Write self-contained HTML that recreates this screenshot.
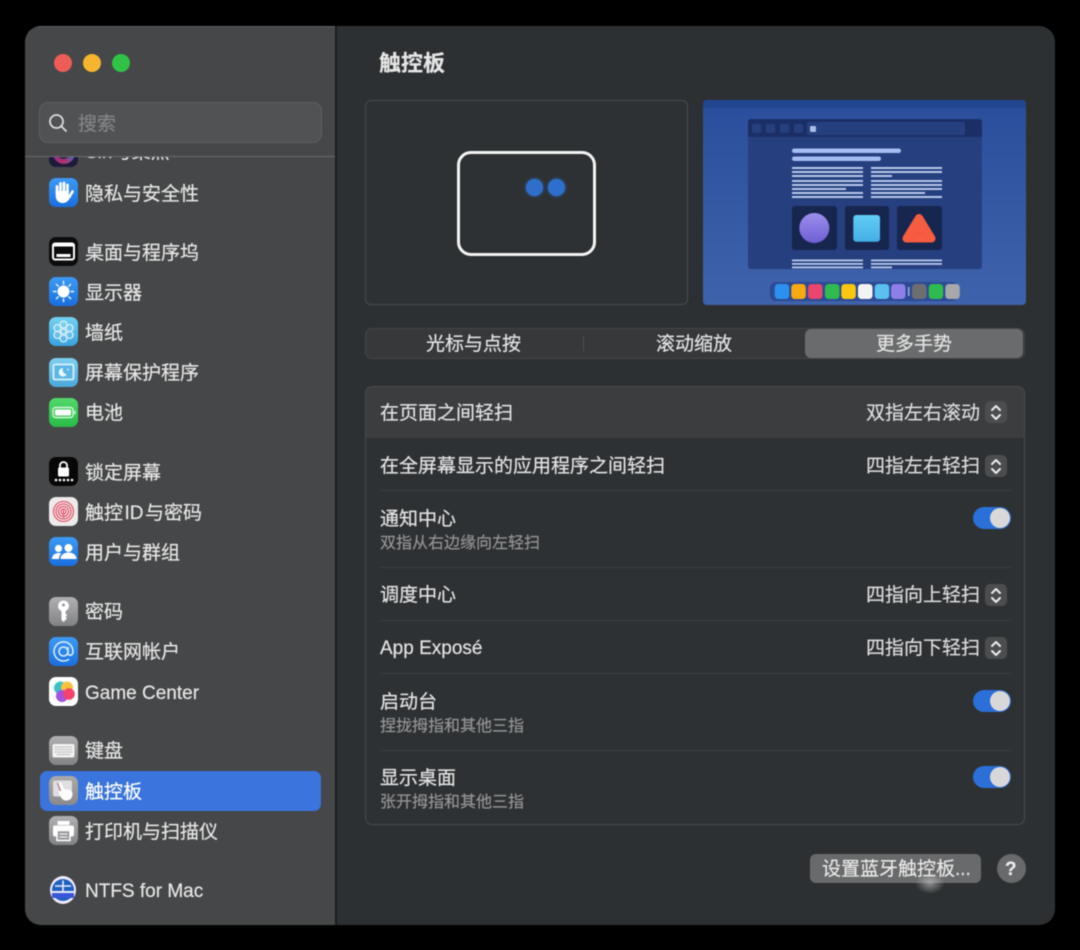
<!DOCTYPE html>
<html lang="zh-CN"><head><meta charset="utf-8"><title>触控板</title>
<style>
*{box-sizing:border-box;margin:0;padding:0}
html,body{width:1080px;height:950px;background:#000;overflow:hidden}
body{position:relative;font-family:"Liberation Sans","Noto Sans CJK SC",sans-serif;color:#e3e3e3}
#all{position:absolute;left:0;top:0;width:1080px;height:950px;filter:blur(.45px)}
.a{position:absolute}
#win{left:25px;top:26px;width:1030px;height:899px;border-radius:16px;overflow:hidden;background:#2d3032}
#side{left:0;top:0;width:310px;height:899px;background:#464748;border-top:1px solid #5f6061}
#div{left:310px;top:0;width:2px;height:899px;background:#1c1d1e}
.t{position:absolute;white-space:nowrap;line-height:26px;font-size:19px;margin-top:2px;-webkit-text-stroke:.2px currentColor}
.ico{position:absolute;left:49px;width:29px;height:29px;border-radius:7px;overflow:hidden}
.ico svg{display:block;width:29px;height:29px}
.l{position:absolute;left:85px;white-space:nowrap;line-height:26px;font-size:19px;color:#e6e6e6;margin-top:2px;-webkit-text-stroke:.2px currentColor}
.sep{position:absolute;left:380px;width:631px;height:1px;background:#3b3d3f}
.sub{position:absolute;left:380px;white-space:nowrap;font-size:16px;line-height:22px;color:#959697;margin-top:2px;-webkit-text-stroke:.15px currentColor}
.r{position:absolute;right:100px;white-space:nowrap;font-size:19px;line-height:26px;color:#dcdcdc;margin-top:2px;-webkit-text-stroke:.2px currentColor}
.st{position:absolute;left:985px;width:22px;height:22px;border-radius:5px;background:#4b4d4f}
.tg{position:absolute;left:973px;width:38px;height:22px;border-radius:11px;background:#2a70d8}
.tg i{position:absolute;right:1px;top:1px;width:20px;height:20px;border-radius:50%;background:#d8d8d8}
</style></head><body>
<div id="all">
<div class="a" id="win">
<div class="a" id="side"></div>
<div class="a" id="div"></div>
</div>

<!-- traffic -->
<div class="a" style="left:54px;top:54px;width:18px;height:18px;border-radius:50%;background:#ee5c58"></div>
<div class="a" style="left:83px;top:54px;width:18px;height:18px;border-radius:50%;background:#f5b52e"></div>
<div class="a" style="left:112px;top:54px;width:18px;height:18px;border-radius:50%;background:#2fc244"></div>

<!-- search -->
<div class="a" style="left:39px;top:102px;width:283px;height:41px;border-radius:9px;background:#515253;border:1px solid #5e5f60"></div>
<svg class="a" style="left:47px;top:112px" width="22" height="22" viewBox="0 0 22 22" fill="none" stroke="#dcdcdc" stroke-width="1.8" stroke-linecap="round"><circle cx="9.500" cy="9.500" r="6.500"/><path d="M14.300 14.300L19 19"/></svg>
<div class="t" style="left:78px;top:110px;color:#858687">搜索</div>

<!-- sidebar clipped row -->
<div class="a" style="left:25px;top:157px;width:310px;height:12px;overflow:hidden">
 <div class="a" style="left:24px;top:-19px;width:29px;height:29px;border-radius:7px;background:#1e1a3c"></div>
 <div class="a" style="left:27.500px;top:-15.500px;width:22px;height:22px;border-radius:50%;background:conic-gradient(#2f8fc0,#3a6fc8,#b3306a,#8a2c8c,#2f8fc0)"></div>
 <div class="a" style="left:32px;top:-11px;width:13px;height:13px;border-radius:50%;background:#23264a"></div>
 <div class="t" style="left:60px;top:-19px">Siri与聚焦</div>
</div>
<div class="a" style="left:25px;top:156px;width:310px;height:1px;background:#6b6c6d"></div>

<!-- selected row -->
<div class="a" style="left:40px;top:771px;width:281px;height:40px;border-radius:7px;background:#3a74dc"></div>

<!-- icons -->
<div class="ico" style="top:178px;background:linear-gradient(#3d9bf5,#1a6fe0)"><svg viewBox="0 0 29 29"><g stroke="#fff" stroke-width="2.700" stroke-linecap="round" fill="none"><path d="M8 15V8.500M11.500 14V5.500M15 14V5M18.500 14V7M20 19.500l3.500-6"/></g><path d="M6.700 13H19.800V18.500L21 19c-1 3.500-3.500 6-7 6-4.500 0-7.300-3-7.300-7z" fill="#fff"/></svg></div>
<div class="ico" style="top:237px;background:#0c0c0d"><svg viewBox="0 0 29 29"><rect x="4" y="6.500" width="21" height="16" rx="2" fill="none" stroke="#fff" stroke-width="2"/><rect x="4" y="6.500" width="21" height="3" fill="#fff"/><rect x="7.500" y="17" width="14" height="3" fill="#fff"/></svg></div>
<div class="ico" style="top:277px;background:linear-gradient(#3d9bf5,#1a6fe0)"><svg viewBox="0 0 29 29"><circle cx="14.500" cy="14.500" r="6" fill="#fff"/><path d="M14.500 4.500v2.500M14.500 22v2.500M4.500 14.500H7M22 14.500h2.500M7.400 7.400l1.700 1.700M19.900 19.900l1.700 1.700M7.400 21.600l1.700-1.700M19.900 9.100l1.700-1.700" stroke="#eaf4ff" stroke-width="1.500" stroke-linecap="round"/></svg></div>
<div class="ico" style="top:317px;background:linear-gradient(#73d3f3,#3aa2e0)"><svg viewBox="0 0 29 29" fill="rgba(255,255,255,.15)" stroke="#e8f7fd" stroke-width="1.100"><circle cx="14.500" cy="14.500" r="2.400"/><circle cx="14.500" cy="7.500" r="3.500"/><circle cx="14.500" cy="21.500" r="3.500"/><circle cx="8.400" cy="11" r="3.500"/><circle cx="20.600" cy="11" r="3.500"/><circle cx="8.400" cy="18" r="3.500"/><circle cx="20.600" cy="18" r="3.500"/></svg></div>
<div class="ico" style="top:358px;background:linear-gradient(#7fd0f0,#4aa8dc)"><svg viewBox="0 0 29 29"><rect x="4.500" y="6.500" width="20" height="15" rx="1.500" fill="#5cb6e4" stroke="#d8f1fb" stroke-width="1.800"/><path d="M14 10a4.300 4.300 0 1 0 3.800 6.300A4.600 4.600 0 0 1 14 10z" fill="#e8f7fd"/><circle cx="19" cy="11.500" r=".9" fill="#e8f7fd"/></svg></div>
<div class="ico" style="top:398px;background:linear-gradient(#52d96a,#2bbb49)"><svg viewBox="0 0 29 29"><rect x="4" y="9.500" width="20" height="10" rx="2.500" fill="none" stroke="#d8f5dd" stroke-width="1.400"/><rect x="6" y="11.500" width="16" height="6" rx="1.200" fill="#fff"/><rect x="25" y="12.700" width="1.500" height="3.600" rx=".7" fill="#d8f5dd"/></svg></div>
<div class="ico" style="top:457px;background:#070708"><svg viewBox="0 0 29 29"><path d="M11 11V8.500a3.500 3.500 0 0 1 7 0V11" fill="none" stroke="#fff" stroke-width="1.800"/><rect x="9" y="10.500" width="11" height="9" rx="1.400" fill="#fff"/><g fill="#fff"><circle cx="7" cy="23" r="1.300"/><circle cx="11" cy="23" r="1.300"/><circle cx="15" cy="23" r="1.300"/><circle cx="19" cy="23" r="1.300"/><circle cx="23" cy="23" r="1.300"/></g></svg></div>
<div class="ico" style="top:497px;background:#eceaea"><svg viewBox="0 0 29 29" fill="none" stroke="#e85a70" stroke-width="1.300"><circle cx="14.500" cy="14.500" r="10"/><circle cx="14.500" cy="14.500" r="7.500"/><circle cx="14.500" cy="14.500" r="5"/><circle cx="14.500" cy="14.500" r="2.500"/><path d="M14.500 12v9"/></svg></div>
<div class="ico" style="top:537px;background:linear-gradient(#3d9bf5,#1a6fe0)"><svg viewBox="0 0 29 29" fill="#fff"><circle cx="9.500" cy="11.500" r="3.600"/><circle cx="19.500" cy="11" r="4"/><path d="M3 22c0-4 3-6 6.500-6 1 0 2 .2 2.700.6C10.500 18 10 20 10 22zM11.500 22c0-4 3.500-6.500 8-6.500s8 2.500 8 6.500z"/></svg></div>
<div class="ico" style="top:597px;background:linear-gradient(#b0b0b2,#828385)"><svg viewBox="0 0 29 29"><path d="M14.500 3.500a5.500 5.500 0 0 1 2 10.600v2.400l1.700 1.600-1.700 1.700 1.500 1.500-3.500 3.700-2-2V14.100a5.500 5.500 0 0 1 2-10.600z" fill="#fff"/><circle cx="14.500" cy="8" r="1.500" fill="#9a9a9c"/></svg></div>
<div class="ico" style="top:637px;background:linear-gradient(#3d9bf5,#1a6fe0)"><svg viewBox="0 0 29 29" fill="none" stroke="#dff0ff" stroke-width="1.500"><circle cx="14.500" cy="14.500" r="4.500"/><path d="M19 10v6c0 3.500 5 3 5-1.500a9.500 9.500 0 1 0-4 7.700"/></svg></div>
<div class="ico" style="top:677px;background:#fff"><svg viewBox="0 0 29 29"><circle cx="11.500" cy="11" r="6.500" fill="#39c3c8"/><circle cx="18" cy="10.500" r="6" fill="#f9c23c"/><circle cx="13" cy="19" r="6" fill="#a054e0"/><circle cx="20" cy="17" r="5.800" fill="#f5416c"/></svg></div>
<div class="ico" style="top:736px;background:linear-gradient(#b0b0b2,#828385)"><svg viewBox="0 0 29 29"><rect x="3.500" y="8" width="22" height="13.500" rx="2" fill="#f2f2f2"/><path d="M6 11h17M6 13.500h17M6 16h17M8 18.500h13" stroke="#9a9a9c" stroke-width="1" stroke-dasharray="1.200 .8"/></svg></div>
<div class="ico" style="top:776px;background:linear-gradient(#aaa,#8a8a8c)"><svg viewBox="0 0 29 29"><rect x="4" y="4.500" width="19" height="16" rx="2" fill="#dedede"/><path d="M10 8c-.6-1.600 1.800-2.400 2.500-.8L15 13l4 .5c3 .5 4.500 2 4.500 4.500 0 4-2.500 6.500-6 6.500-3 0-4.600-1.300-6-4l-1.800-4c-.6-1.500 1.200-2.400 2.200-1.200l1 1.200z" fill="#fff"/><path d="M8.500 7l3 8" stroke="#a8548e" stroke-width="1"/></svg></div>
<div class="ico" style="top:816px;background:linear-gradient(#b0b0b2,#828385)"><svg viewBox="0 0 29 29"><rect x="8.500" y="5" width="12" height="4" fill="#fff"/><rect x="4" y="9.500" width="21" height="11" rx="2" fill="#fff"/><rect x="8" y="14.500" width="13" height="10" fill="#9a9a9c" stroke="#fff" stroke-width="1.500"/><path d="M10.500 18h8M10.500 21h8" stroke="#fff" stroke-width="1"/></svg></div>
<div class="a" style="left:50px;top:876px;width:26px;height:28px;border-radius:50%;overflow:hidden;background:#f0ebff"><svg width="26" height="28" viewBox="0 0 26 28" style="display:block"><circle cx="13" cy="14" r="11" fill="#1f5fbf"/><rect x="2" y="17" width="22" height="5" fill="#3b55d8"/><rect x="2" y="15" width="22" height="2" fill="#e8eefb"/><path d="M5 10h16M13 4.500v10.500" stroke="#e8eefb" stroke-width="1.600"/></svg></div>

<!-- sidebar labels -->
<div class="l" style="top:180px">隐私与安全性</div>
<div class="l" style="top:239px">桌面与程序坞</div>
<div class="l" style="top:279px">显示器</div>
<div class="l" style="top:319px">墙纸</div>
<div class="l" style="top:359px">屏幕保护程序</div>
<div class="l" style="top:399px">电池</div>
<div class="l" style="top:459px">锁定屏幕</div>
<div class="l" style="top:499px">触控<span style="margin:0 1.500px">ID</span>与密码</div>
<div class="l" style="top:539px">用户与群组</div>
<div class="l" style="top:598px">密码</div>
<div class="l" style="top:638px">互联网帐户</div>
<div class="l" style="top:679px">Game Center</div>
<div class="l" style="top:737px">键盘</div>
<div class="l" style="top:778px;color:#fff">触控板</div>
<div class="l" style="top:818px">打印机与扫描仪</div>
<div class="l" style="top:877px">NTFS for Mac</div>

<!-- main -->
<div class="t" style="left:379px;top:49px;font-size:22px;font-weight:700;color:#e6e6e6">触控板</div>

<div class="a" style="left:365px;top:100px;width:323px;height:205px;border-radius:6px;background:#2e3133;border:1px solid #484a4c"></div>
<div class="a" style="left:457px;top:151px;width:139px;height:105px;border-radius:14px;border:3px solid #f4f4f4"></div>
<div class="a" style="left:526px;top:179px;width:17px;height:17px;border-radius:50%;background:#2f6fcc;box-shadow:0 0 3px #2f6fcc"></div>
<div class="a" style="left:548px;top:179px;width:17px;height:17px;border-radius:50%;background:#2f6fcc;box-shadow:0 0 3px #2f6fcc"></div>

<svg class="a" style="left:703px;top:100px" width="323" height="205" viewBox="0 0 323 205">
<defs><linearGradient id="bg" x1="0" y1="0" x2="0" y2="1"><stop offset="0" stop-color="#2b4e9c"/><stop offset="1" stop-color="#3f63ab"/></linearGradient>
<linearGradient id="c1" x1="0" y1="0" x2="0" y2="1"><stop offset="0" stop-color="#9b8eec"/><stop offset="1" stop-color="#6f60d4"/></linearGradient>
<linearGradient id="c2" x1="0" y1="0" x2="0" y2="1"><stop offset="0" stop-color="#62cdf5"/><stop offset="1" stop-color="#45aee6"/></linearGradient>
<linearGradient id="c3" x1="0" y1="0" x2="0" y2="1"><stop offset="0" stop-color="#f8694a"/><stop offset="1" stop-color="#f5533a"/></linearGradient></defs>
<rect width="323" height="205" rx="4" fill="url(#bg)"/>
<path d="M0 8V4a4 4 0 0 1 4-4h315a4 4 0 0 1 4 4v4z" fill="#22468f"/>
<rect x="45" y="19" width="234" height="150" rx="3" fill="#263f7f"/>
<path d="M45 37V22a3 3 0 0 1 3-3h228a3 3 0 0 1 3 3v15z" fill="#1b2f66"/>
<g fill="#26407f"><rect x="49" y="24" width="9" height="9" rx="2"/><rect x="63" y="24" width="9" height="9" rx="2"/><rect x="77" y="24" width="9" height="9" rx="2"/><rect x="91" y="24" width="9" height="9" rx="2"/><rect x="104" y="22" width="158" height="13" rx="2"/></g>
<rect x="107" y="26" width="6" height="6" rx="1" fill="#a8bce6"/>
<rect x="89" y="48.500" width="109" height="4.500" rx="2.200" fill="#a5bdf0"/>
<rect x="89" y="56.500" width="89" height="4.500" rx="2.200" fill="#a5bdf0"/>
<g fill="#b8c8ea">
<rect x="89" y="67" width="71" height="2"/><rect x="89" y="71" width="71" height="2"/><rect x="89" y="75" width="71" height="2"/><rect x="89" y="80" width="71" height="2"/><rect x="89" y="84" width="71" height="2"/><rect x="89" y="88" width="54" height="2"/><rect x="89" y="92" width="71" height="2"/><rect x="89" y="96" width="71" height="2"/>
<rect x="168" y="67" width="71" height="2"/><rect x="168" y="71" width="71" height="2"/><rect x="168" y="75" width="21" height="2"/><rect x="168" y="80" width="71" height="2"/><rect x="168" y="84" width="71" height="2"/><rect x="168" y="88" width="71" height="2"/><rect x="168" y="92" width="54" height="2"/><rect x="168" y="96" width="71" height="2"/>
<rect x="89" y="159.500" width="71" height="1.800"/><rect x="89" y="163" width="71" height="1.800"/><rect x="89" y="166.500" width="71" height="1.800"/>
<rect x="168" y="159.500" width="71" height="1.800"/><rect x="168" y="163" width="71" height="1.800"/><rect x="168" y="166.500" width="21" height="1.800"/>
</g>
<g fill="#17264f"><rect x="89" y="106" width="45" height="44" rx="3"/><rect x="142" y="106" width="44" height="44" rx="3"/><rect x="194" y="106" width="45" height="44" rx="3"/></g>
<circle cx="111.300" cy="128" r="15" fill="url(#c1)"/>
<rect x="150.300" y="115" width="26.700" height="26.700" rx="3" fill="url(#c2)"/>
<polygon points="216,118 203.500,138.500 228.500,138.500" fill="url(#c3)" stroke="#f65c40" stroke-width="8" stroke-linejoin="round"/>
<rect x="67" y="182" width="188" height="19" rx="6" fill="#2d4a94"/>
<rect x="71.700" y="184" width="14.500" height="15" rx="3.500" fill="#2d8ff0"/>
<rect x="88.300" y="184" width="14.500" height="15" rx="3.500" fill="#f7a90f"/>
<rect x="105" y="184" width="14.500" height="15" rx="3.500" fill="#e8466c"/>
<rect x="122" y="184" width="14.500" height="15" rx="3.500" fill="#2fbb4f"/>
<rect x="138.300" y="184" width="14.500" height="15" rx="3.500" fill="#fbc70e"/>
<rect x="155" y="184" width="14.500" height="15" rx="3.500" fill="#f3f3f3"/>
<rect x="171.700" y="184" width="14.500" height="15" rx="3.500" fill="#5ac0f0"/>
<rect x="188" y="184" width="14.500" height="15" rx="3.500" fill="#8d7ee8"/>
<rect x="205" y="187" width="1.500" height="9" fill="#a0b0d0"/>
<rect x="209" y="184" width="14.500" height="15" rx="3.500" fill="#6e6e72"/>
<rect x="225.700" y="184" width="14.500" height="15" rx="3.500" fill="#2fbb4f"/>
<rect x="242.300" y="184" width="14.500" height="15" rx="3.500" fill="#a8a8aa"/>
</svg>

<!-- tabs -->
<div class="a" style="left:365px;top:328px;width:660px;height:31px;border-radius:7px;background:#36383a;border:1px solid #444648"></div>
<div class="a" style="left:583px;top:336px;width:1px;height:15px;background:#4c4e50"></div>
<div class="a" style="left:805px;top:329px;width:218px;height:29px;border-radius:6px;background:#6a6b6c"></div>
<div class="t" style="left:426px;top:330px">光标与点按</div>
<div class="t" style="left:656px;top:330px">滚动缩放</div>
<div class="t" style="left:876px;top:330px">更多手势</div>

<!-- table -->
<div class="a" style="left:365px;top:386px;width:660px;height:439px;border-radius:7px;background:#2e3133;border:1px solid #484a4c"></div>
<div class="a" style="left:366px;top:387px;width:658px;height:51px;border-radius:6px 6px 0 0;background:#3b3d3f"></div>
<div class="sep" style="top:490px"></div>
<div class="sep" style="top:567px"></div>
<div class="sep" style="top:620px"></div>
<div class="sep" style="top:673px"></div>
<div class="sep" style="top:750px"></div>

<div class="t" style="left:380px;top:399px">在页面之间轻扫</div>
<div class="t" style="left:380px;top:452px">在全屏幕显示的应用程序之间轻扫</div>
<div class="t" style="left:380px;top:505px">通知中心</div>
<div class="sub" style="top:531px">双指从右边缘向左轻扫</div>
<div class="t" style="left:380px;top:581px">调度中心</div>
<div class="t" style="left:380px;top:634px">App Exposé</div>
<div class="t" style="left:380px;top:688px">启动台</div>
<div class="sub" style="top:714px">捏拢拇指和其他三指</div>
<div class="t" style="left:380px;top:764px">显示桌面</div>
<div class="sub" style="top:790px">张开拇指和其他三指</div>

<div class="r" style="top:399px">双指左右滚动</div>
<div class="r" style="top:452px">四指左右轻扫</div>
<div class="r" style="top:581px">四指向上轻扫</div>
<div class="r" style="top:634px">四指向下轻扫</div>

<div class="st" style="top:401px"><svg width="22" height="22" viewBox="0 0 22 22" fill="none" stroke="#ececec" stroke-width="2" stroke-linecap="round" stroke-linejoin="round"><path d="M7 9l4-4 4 4M7 14l4 4 4-4"/></svg></div>
<div class="st" style="top:455px"><svg width="22" height="22" viewBox="0 0 22 22" fill="none" stroke="#ececec" stroke-width="2" stroke-linecap="round" stroke-linejoin="round"><path d="M7 9l4-4 4 4M7 14l4 4 4-4"/></svg></div>
<div class="st" style="top:584px"><svg width="22" height="22" viewBox="0 0 22 22" fill="none" stroke="#ececec" stroke-width="2" stroke-linecap="round" stroke-linejoin="round"><path d="M7 9l4-4 4 4M7 14l4 4 4-4"/></svg></div>
<div class="st" style="top:637px"><svg width="22" height="22" viewBox="0 0 22 22" fill="none" stroke="#ececec" stroke-width="2" stroke-linecap="round" stroke-linejoin="round"><path d="M7 9l4-4 4 4M7 14l4 4 4-4"/></svg></div>

<div class="tg" style="top:507px"><i></i></div>
<div class="tg" style="top:690px"><i></i></div>
<div class="tg" style="top:766px"><i></i></div>

<!-- bottom -->
<div class="a" style="left:810px;top:854px;width:171px;height:29px;border-radius:6px;background:#696a6b"></div>
<div class="t" style="left:822px;top:855px;font-size:19px;color:#e8e8e8">设置蓝牙触控板...</div>
<div class="a" style="left:997px;top:854px;width:29px;height:29px;border-radius:50%;background:#696a6b"></div>
<div class="t" style="left:1005px;top:855px;font-size:19px;font-weight:700;color:#ececec">?</div>
<div class="a" style="left:915px;top:872px;width:30px;height:22px;background:radial-gradient(ellipse at center,rgba(220,220,220,.55),rgba(220,220,220,0) 70%)"></div>
</div>
</body></html>
